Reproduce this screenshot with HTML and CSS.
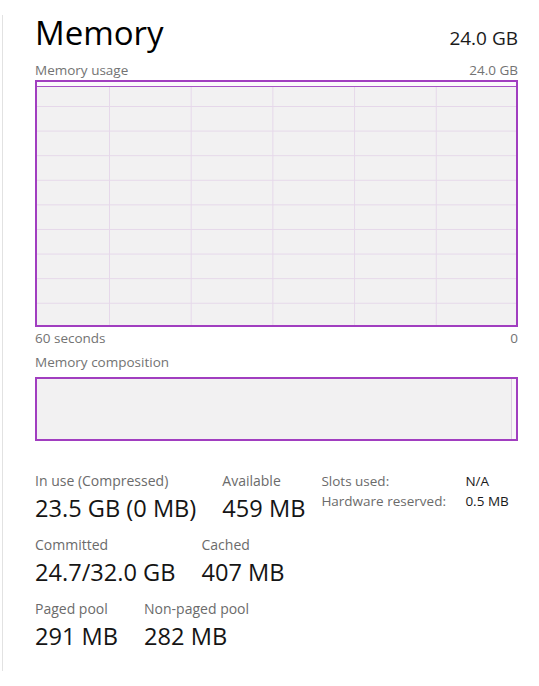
FILE: index.html
```html
<!DOCTYPE html>
<html lang="en">
<head>
<meta charset="utf-8">
<title>Memory</title>
<link rel="stylesheet" href="styles.css">
</head>
<body>
<div class="panel">
  <div class="head">
    <h1 class="title">Memory</h1>
    <span class="total">24.0 GB</span>
  </div>
  <div class="caption caption-top"><span>Memory usage</span><span>24.0 GB</span></div>
  <div class="graph"><div class="graph-fill"></div></div>
  <div class="caption caption-axis"><span>60 seconds</span><span>0</span></div>
  <div class="caption caption-comp"><span>Memory composition</span></div>
  <div class="composition"><div class="comp-inuse"></div><div class="comp-free"></div></div>
  <div class="stats">
    <div class="stats-main">
      <div class="stat-row">
        <div class="stat"><div class="stat-label">In use (Compressed)</div><div class="stat-value">23.5 GB (0 MB)</div></div>
        <div class="stat"><div class="stat-label">Available</div><div class="stat-value">459 MB</div></div>
      </div>
      <div class="stat-row">
        <div class="stat"><div class="stat-label">Committed</div><div class="stat-value">24.7/32.0 GB</div></div>
        <div class="stat"><div class="stat-label">Cached</div><div class="stat-value">407 MB</div></div>
      </div>
      <div class="stat-row">
        <div class="stat"><div class="stat-label">Paged pool</div><div class="stat-value">291 MB</div></div>
        <div class="stat"><div class="stat-label">Non-paged pool</div><div class="stat-value">282 MB</div></div>
      </div>
    </div>
    <dl class="specs">
      <dt>Slots used:</dt><dd>N/A</dd>
      <dt>Hardware reserved:</dt><dd>0.5 MB</dd>
    </dl>
  </div>
</div>
</body>
</html>
```

FILE: styles.css
```css
html, body {
  margin: 0;
  background: #ffffff;
}
body {
  font-family: "Open Sans", "Noto Sans", sans-serif;
  color: #111111;
}
.panel {
  margin: 15px 0 0 2px;
  height: 656px;
  border-left: 1px solid #e2e2e2;
  padding: 0 21px 0 32px;
}
.head {
  display: flex;
  justify-content: space-between;
  align-items: baseline;
  height: 36px;
}
.title {
  margin: 0;
  font-size: 33px;
  font-weight: 400;
  line-height: 36px;
  color: #000;
}
.total {
  font-size: 19px;
  line-height: 36px;
  color: #1a1a1a;
}
.caption {
  display: flex;
  justify-content: space-between;
  font-size: 13.5px;
  line-height: 16px;
  color: #737373;
}
.caption-top { margin-top: 11px; }
.caption-axis { margin-top: 3px; }
.caption-comp { margin-top: 8px; }
.graph {
  margin-top: 2px;
  height: 247px;
  box-sizing: border-box;
  border: 2px solid #a13ec0;
  padding-top: 4px;
  display: flex;
  flex-direction: column;
  background: #fbfafb;
}
.graph-fill {
  flex: 1;
  border-top: 1px solid #a855c6;
  background-color: #f2f1f2;
  background-image:
    linear-gradient(to right, #e6d8ea 1px, transparent 1px),
    linear-gradient(to bottom, #e6d8ea 1px, transparent 1px);
  background-size: 81.7px 100%, 100% 24.6px;
  background-position: 72px 0, 0 19px;
}
.composition {
  margin-top: 7px;
  height: 64px;
  box-sizing: border-box;
  border: 2px solid #a13ec0;
  display: flex;
}
.comp-inuse {
  flex: 1;
  background: #f2f1f2;
  border-right: 1px solid #dccbe2;
}
.comp-free {
  width: 4px;
  background: #f7f6f7;
}
.stats {
  display: flex;
  align-items: flex-start;
  gap: 16px;
  margin-top: 30px;
}
.stats-main {
  display: flex;
  flex-direction: column;
  gap: 12px;
}
.stat-row {
  display: flex;
  gap: 26px;
}
.stat-label {
  font-size: 14px;
  line-height: 20px;
  color: #6b6b6b;
}
.stat-value {
  margin-top: 2px;
  font-size: 23.6px;
  line-height: 30px;
  color: #151515;
}
.specs {
  margin: 0;
  display: grid;
  grid-template-columns: 144px auto;
  align-content: start;
  font-size: 13.5px;
  line-height: 20px;
}
.specs dt {
  color: #6b6b6b;
}
.specs dd {
  margin: 0;
  color: #1a1a1a;
}
```
